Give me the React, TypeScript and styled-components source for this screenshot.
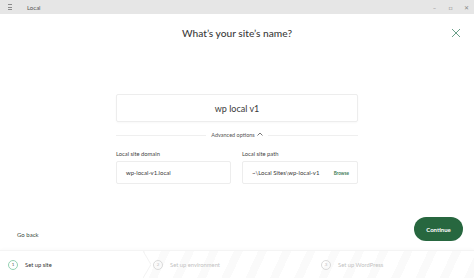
import { FC } from 'react'
import styled, { createGlobalStyle } from 'styled-components'

const GlobalStyle = createGlobalStyle`
  html, body {
    margin: 0;
    padding: 0;
    background: #ffffff;
  }
  body {
    font-family: Lato, "Open Sans", "Liberation Sans", sans-serif;
    color: #333;
    -webkit-font-smoothing: antialiased;
  }
`

const Window = styled('div')`
  width: 474px;
  height: 278px;
  display: flex;
  flex-direction: column;
  overflow: hidden;
  background: #fff;
`

const TitleBar = styled('div')`
  height: 14px;
  flex-shrink: 0;
  display: flex;
  align-items: center;
  background: #e6e6e6;
  padding: 0 4px 0 8px;
  font-size: 6px;
  color: #555;
`

const MenuIcon = styled('span')`
  width: 4px;
  height: 4px;
  border-top: 1px solid #8a8a8a;
  border-bottom: 1px solid #8a8a8a;
  position: relative;
  margin-right: 15px;
  &::after {
    content: '';
    position: absolute;
    left: 0;
    right: 0;
    top: 1.5px;
    border-top: 1px solid #8a8a8a;
  }
`

const AppName = styled('span')`
  flex: 1;
`

const WinControls = styled('div')`
  display: flex;
  align-items: center;
  gap: 9px;
  color: #888;
  font-size: 6px;
`

const WinButton = styled('span')`
  width: 7px;
  display: flex;
  justify-content: center;
`

const Main = styled('div')`
  flex: 1;
  display: flex;
  flex-direction: column;
`

const Header = styled('div')`
  display: grid;
  grid-template-columns: 1fr auto 1fr;
  align-items: center;
  padding: 10px 10px 0 10px;
  height: 18px;
`

const Title = styled('h1')`
  grid-column: 2;
  margin: 0;
  font-size: 10.2px;
  font-weight: 500;
  color: #3b3b3b;
`

const CloseButton = styled('button')`
  justify-self: end;
  border: 0;
  background: none;
  padding: 0;
  margin-right: 2px;
  width: 12px;
  height: 12px;
  display: flex;
  color: #6a9f89;
`

const Form = styled('div')`
  width: 242px;
  margin: 52px auto 0;
  display: flex;
  flex-direction: column;
`

const NameInput = styled('div')`
  height: 28px;
  border: 1px solid #ededed;
  border-radius: 2px;
  box-sizing: border-box;
  display: flex;
  align-items: center;
  justify-content: center;
  font-size: 9px;
  color: #3a3a3a;
  box-shadow: 0 1px 2px rgba(0, 0, 0, 0.03);
`

const Divider = styled('div')`
  display: flex;
  align-items: center;
  gap: 5px;
  margin-top: 10px;
  font-size: 5.5px;
  color: #555;
  &::before, &::after {
    content: '';
    flex: 1;
    border-top: 1px solid #efefef;
  }
`

const Caret = styled('svg')`
  width: 6px;
  height: 4px;
  margin-left: 2px;
  vertical-align: 1px;
`

const Fields = styled('div')`
  display: grid;
  grid-template-columns: 115px 116px;
  column-gap: 11px;
  margin-top: 12px;
`

const Field = styled('div')`
  display: flex;
  flex-direction: column;
  gap: 4px;
`

const Label = styled('label')`
  font-size: 5.8px;
  color: #444;
`

const TextBox = styled('div')`
  height: 23px;
  box-sizing: border-box;
  border: 1px solid #ededed;
  border-radius: 2px;
  display: flex;
  align-items: center;
  justify-content: space-between;
  padding: 0 8px 0 9px;
  font-size: 6px;
  color: #3a3a3a;
`

const Browse = styled('span')`
  font-size: 4.6px;
  font-weight: 700;
  color: #3f7a58;
`

const Footer = styled('div')`
  margin-top: auto;
  display: flex;
  justify-content: space-between;
  align-items: flex-start;
  padding: 0 11px 9px 17px;
`

const BackLink = styled('a')`
  font-size: 6px;
  color: #3a4a42;
  margin-top: 14px;
`

const ContinueButton = styled('button')`
  width: 49px;
  height: 24px;
  border: 0;
  border-radius: 12px;
  background: #27673f;
  color: #fff;
  font-family: inherit;
  font-size: 6px;
  font-weight: 700;
  padding: 0;
`

const Steps = styled('div')`
  height: 27px;
  flex-shrink: 0;
  display: grid;
  grid-template-columns: 143px 168px 1fr;
  border-top: 1px solid #f4f4f4;
  box-shadow: 0 -1px 3px rgba(0, 0, 0, 0.025);
  background: repeating-linear-gradient(
    115deg,
    #ffffff 0px,
    #ffffff 14px,
    #fafafa 14px,
    #fafafa 22px
  );
`

const Step = styled('div')<{ $active?: boolean }>`
  position: relative;
  display: flex;
  align-items: center;
  gap: 7px;
  padding-left: ${({ $active }) => ($active ? '8px' : '10px')};
  background: ${({ $active }) => ($active ? '#fff' : 'transparent')};
  font-size: 5.8px;
  color: ${({ $active }) => ($active ? '#333' : '#c2c2c2')};
`

const StepNumber = styled('span')<{ $active?: boolean }>`
  width: 10px;
  height: 10px;
  box-sizing: border-box;
  border-radius: 50%;
  border: 1px solid ${({ $active }) => ($active ? '#94d2b3' : '#dadada')};
  display: flex;
  align-items: center;
  justify-content: center;
  font-size: 4.5px;
  color: ${({ $active }) => ($active ? '#555' : '#c2c2c2')};
`

const Chevron = styled('svg')`
  position: absolute;
  right: -8px;
  top: 0;
  width: 8px;
  height: 27px;
`

const steps = ['Set up site', 'Set up environment', 'Set up WordPress']

const App: FC = () => {
  return (
    <Window>
      <GlobalStyle />
      <TitleBar>
        <MenuIcon />
        <AppName>Local</AppName>
        <WinControls>
          <WinButton>–</WinButton>
          <WinButton>□</WinButton>
          <WinButton>✕</WinButton>
        </WinControls>
      </TitleBar>
      <Main>
        <Header>
          <Title>What’s your site’s name?</Title>
          <CloseButton aria-label="Close">
            <svg viewBox="0 0 12 12" width="12" height="12">
              <path d="M2 2 L10 10 M10 2 L2 10" stroke="currentColor" strokeWidth="1" fill="none" />
            </svg>
          </CloseButton>
        </Header>
        <Form>
          <NameInput>wp local v1</NameInput>
          <Divider>
            <span>
              Advanced options
              <Caret viewBox="0 0 6 4">
                <path d="M0.5 3.5 L3 1 L5.5 3.5" stroke="#555" strokeWidth="0.8" fill="none" />
              </Caret>
            </span>
          </Divider>
          <Fields>
            <Field>
              <Label>Local site domain</Label>
              <TextBox>wp-local-v1.local</TextBox>
            </Field>
            <Field>
              <Label>Local site path</Label>
              <TextBox>
                <span>~\Local Sites\wp-local-v1</span>
                <Browse>Browse</Browse>
              </TextBox>
            </Field>
          </Fields>
        </Form>
        <Footer>
          <BackLink>Go back</BackLink>
          <ContinueButton>Continue</ContinueButton>
        </Footer>
      </Main>
      <Steps>
        {steps.map((label, i) => (
          <Step key={label} $active={i === 0}>
            <StepNumber $active={i === 0}>{i + 1}</StepNumber>
            {label}
            {i === 0 && (
              <Chevron viewBox="0 0 8 27" preserveAspectRatio="none">
                <path d="M0 0 L8 13.5 L0 27 Z" fill="#fff" />
                <path d="M0 0 L8 13.5 L0 27" stroke="#efefef" strokeWidth="0.8" fill="none" />
              </Chevron>
            )}
          </Step>
        ))}
      </Steps>
    </Window>
  )
}

export default App
